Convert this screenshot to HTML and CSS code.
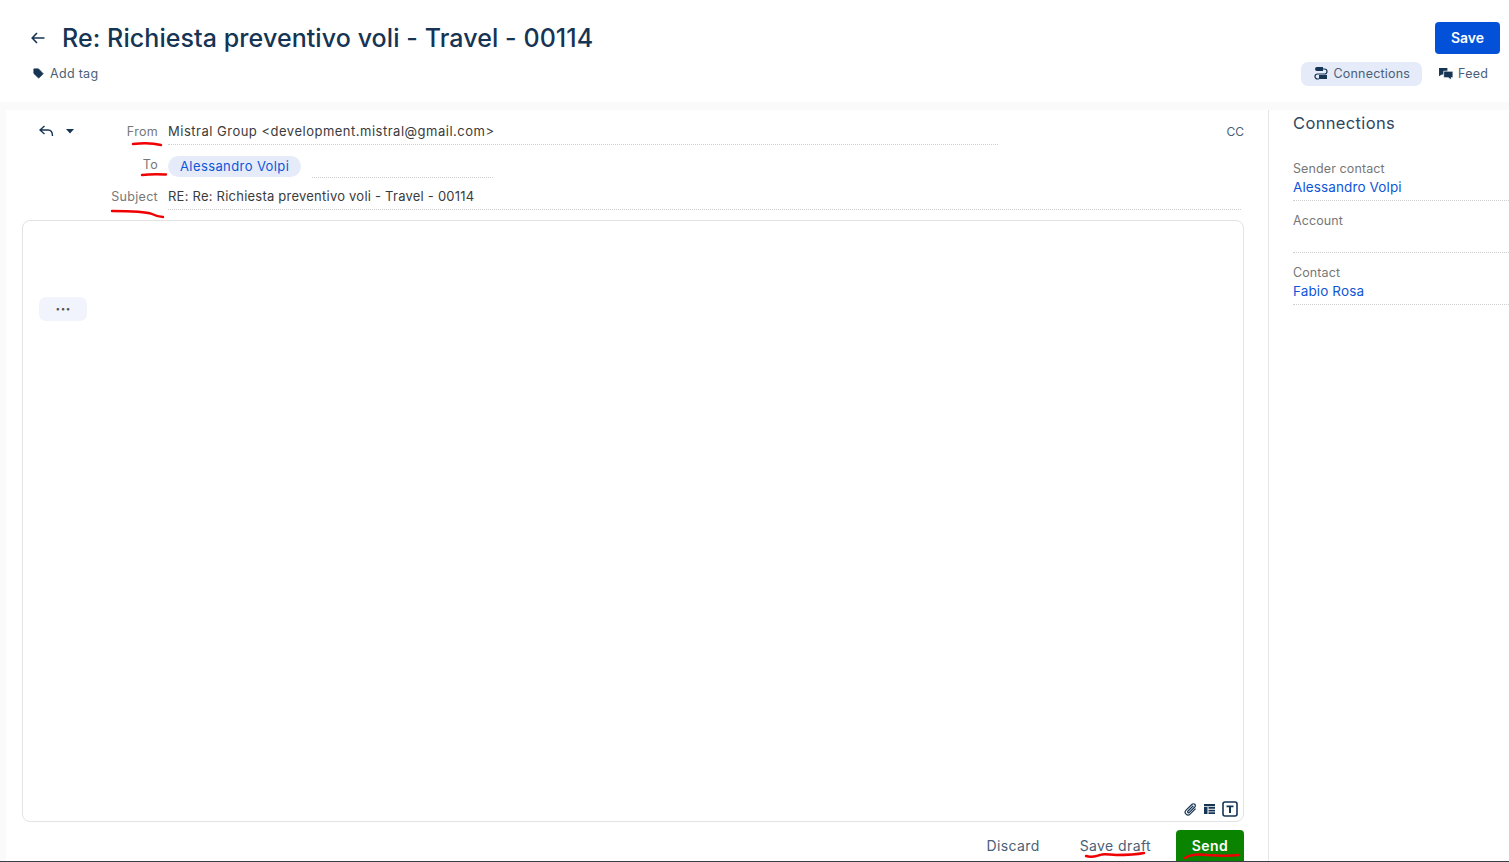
FILE: index.html
```html
<!DOCTYPE html>
<html lang="en">
<head>
    <meta charset="UTF-8">
    <meta name="viewport" content="width=device-width, initial-scale=1.0">
    <title>Re: Richiesta preventivo voli - Travel - 00114</title>
    <link rel="stylesheet" href="styles.css">
</head>
<body>
    <div class="page">
        <header class="page-header">
            <div class="title-row">
                <svg class="back-icon" viewBox="0 0 14 12" width="14" height="12"><path d="M6 1 1.200 6 6 11M1.500 6H13.500" fill="none" stroke="#163454" stroke-width="1.600"/></svg>
                <h1 class="title">Re: Richiesta preventivo voli - Travel - 00114</h1>
                <button class="save-btn">Save</button>
            </div>
            <div class="sub-row">
                <a class="add-tag">
                    <svg viewBox="0 0 12 12" width="11" height="11"><path d="M1 1h5l5 5.200L6.200 11 1 6z" fill="#163454" stroke="#163454" stroke-linejoin="round"/></svg>
                    Add tag
                </a>
                <div class="tabs">
                    <a class="tab tab-active">
                        <svg viewBox="0 0 14 14" width="14" height="14"><path d="M3 1h6v4H3a2 2 0 0 1 0-4zM5 9h8v4H5z" fill="#163454"/><path d="M9 3h1.500a2.500 2.500 0 0 1 0 5H3.500a2.500 2.500 0 0 0 0 5H5" fill="none" stroke="#163454" stroke-width="1.200"/></svg>
                        Connections
                    </a>
                    <a class="tab tab-feed">
                        <svg viewBox="0 0 15 14" width="14" height="13"><path d="M0 1h9v7H3L0 10z" fill="#163454"/><path d="M5 4.500h10v7h-2v2.500l-3-2.500H5z" fill="#163454" stroke="#fff" stroke-width=".8"/></svg>
                        Feed
                    </a>
                </div>
            </div>
        </header>

        <main class="content">
            <section class="composer">
                <div class="fields">
                    <div class="reply-tools">
                        <svg viewBox="0 0 15 12" width="15" height="12"><path d="M5.500 1 1 5l4.500 4M1.500 5H9c3 0 4.500 2 4.500 6" fill="none" stroke="#163454" stroke-width="1.400"/></svg>
                        <svg viewBox="0 0 8 5" width="8" height="5"><path d="M0 0h8L4 4.500z" fill="#163454"/></svg>
                    </div>
                    <div class="field-rows">
                        <div class="field-row row-from">
                            <span class="field-label">From</span>
                            <span class="field-value value-from">Mistral Group &lt;development.mistral@gmail.com&gt;</span>
                            <span class="cc">CC</span>
                        </div>
                        <div class="field-row row-to">
                            <span class="field-label">To</span>
                            <span class="pill">Alessandro Volpi</span>
                            <span class="to-input"></span>
                        </div>
                        <div class="field-row row-subject">
                            <span class="field-label">Subject</span>
                            <span class="field-value value-subject">RE: Re: Richiesta preventivo voli - Travel - 00114</span>
                        </div>
                    </div>
                </div>

                <div class="editor">
                    <button class="quote-btn">···</button>
                    <div class="editor-tools">
                        <svg viewBox="0 0 14 14" width="13" height="13"><path d="M12.500 6 6.500 12a3 3 0 0 1-4.300-4.300L8.700 1.400a2 2 0 0 1 2.900 2.900L5.500 10.300a1 1 0 0 1-1.400-1.400L10 3" fill="none" stroke="#163454" stroke-width="1.300"/></svg>
                        <svg viewBox="0 0 13 12" width="13" height="12"><path d="M1 1h11v2.200H1zM1 4h3.500v7H1zM5.500 4H12v1.800H5.500zM5.500 6.700H12v1.800H5.500zM5.500 9.300H12V11H5.500z" fill="#163454"/></svg>
                        <svg viewBox="0 0 16 16" width="16" height="16"><rect x="1" y="1" width="14" height="14" rx="2" fill="none" stroke="#163454" stroke-width="1.600"/><path d="M4.500 4.500h7v1.800H9V12H7V6.300H4.500z" fill="#163454"/></svg>
                    </div>
                </div>

                <div class="actions">
                    <a class="action-link">Discard</a>
                    <a class="action-link">Save draft</a>
                    <button class="send-btn">Send</button>
                </div>
            </section>

            <aside class="sidebar">
                <h2 class="sidebar-title">Connections</h2>
                <div class="conn-item">
                    <div class="conn-label">Sender contact</div>
                    <a class="conn-value">Alessandro Volpi</a>
                </div>
                <div class="conn-item">
                    <div class="conn-label">Account</div>
                    <a class="conn-value">&nbsp;</a>
                </div>
                <div class="conn-item">
                    <div class="conn-label">Contact</div>
                    <a class="conn-value">Fabio Rosa</a>
                </div>
            </aside>
        </main>

        <!-- red pen marks drawn on top of the screenshot -->
        <svg class="scribbles" viewBox="0 0 1509 862" width="1509" height="862">
            <g fill="none" stroke="#f00000" stroke-width="2.400" stroke-linecap="round">
                <path d="M133 144c9-1 20-1 28 1"/>
                <path d="M142 175c8-1 16-1 24-.5"/>
                <path d="M112 211c16 0 32 0 40 3 4 2 6 3 11 3"/>
                <path d="M1086 856c6 2 10 0 14-1 4-2 10 0 16 0s18 0 28-2"/>
                <path d="M1185 858c6-4 14-4 22-3 12 1 24 1 32 0"/>
            </g>
        </svg>
    </div>
</body>
</html>
```

FILE: styles.css
```css
* {
    box-sizing: border-box;
}
body {
    margin: 0;
    font-family: Inter, "Open Sans", sans-serif;
    background-color: #fff;
    color: #163454;
}
button {
    font-family: inherit;
    border: none;
    cursor: pointer;
}
.page {
    position: relative;
    height: 862px;
    overflow: hidden;
    display: flex;
    flex-direction: column;
    background-color: #fafafa;
    border-bottom: 1px solid #3a3f45;
}
.page-header {
    height: 102px;
    padding: 22px 9px 0 31px;
    background-color: #fff;
    flex-shrink: 0;
}
.title-row {
    display: flex;
    align-items: center;
    height: 32px;
}
.back-icon {
    margin-right: 17px;
}
.title {
    margin: 0;
    font-size: 25px;
    font-weight: 500;
    letter-spacing: 0.08px;
    color: #163454;
}
.save-btn {
    margin-left: auto;
    width: 65px;
    height: 32px;
    padding-bottom: 2px;
    border-radius: 4px;
    background-color: #0251d8;
    color: #fff;
    font-size: 14px;
    font-weight: 600;
}
.sub-row {
    display: flex;
    align-items: center;
    justify-content: space-between;
    margin-top: 8px;
    height: 24px;
}
.add-tag {
    display: flex;
    align-items: center;
    gap: 6px;
    padding: 0 0 2px 2px;
    font-size: 12.5px;
    letter-spacing: 0.3px;
    color: #4a5f78;
}
.tabs {
    display: flex;
    gap: 5px;
}
.tab {
    display: flex;
    align-items: center;
    gap: 5px;
    height: 24px;
    padding: 0 12px 2px 13px;
    border-radius: 7px;
    font-size: 12.5px;
    letter-spacing: 0.2px;
    color: #4a5f78;
}
.tab-active {
    background-color: #e5ebf8;
}
.tab-feed {
    padding-left: 12px;
}
.content {
    display: flex;
    flex: 1;
    min-height: 0;
    margin-top: 8px;
    margin-left: 6px;
    background-color: #fff;
}
.composer {
    width: 1263px;
    flex-shrink: 0;
    padding: 8px 24px 0 16px;
    border-right: 1px solid #e6e6e6;
    display: flex;
    flex-direction: column;
}
.fields {
    display: flex;
    flex-shrink: 0;
}
.reply-tools {
    width: 60px;
    padding: 0 0 0 17px;
    display: flex;
    align-items: center;
    gap: 12px;
    height: 26px;
    flex-shrink: 0;
}
.field-rows {
    flex: 1;
    margin-left: -76px;
    padding-left: 76px;
}
.field-row {
    display: flex;
    align-items: center;
    font-size: 13px;
}
.field-label {
    width: 82px;
    margin-right: 10px;
    margin-left: -6px;
    text-align: right;
    font-size: 12.5px;
    letter-spacing: 0.3px;
    color: #777;
}
.field-value {
    color: #3b3b3b;
}
.row-from {
    height: 27px;
}
.value-from {
    width: 830px;
    height: 27px;
    line-height: 27px;
    letter-spacing: 0.5px;
    border-bottom: 1px dotted #cfcfcf;
}
.cc {
    margin-left: auto;
    font-size: 12px;
    color: #4a5f78;
}
.row-to {
    height: 37px;
}
.row-to .field-label {
    margin-top: 1px;
}
.pill {
    height: 21px;
    margin-top: 6px;
    padding: 0 12px;
    line-height: 21px;
    border-radius: 11px;
    background-color: #e5ebf8;
    color: #0e56d8;
    letter-spacing: 0.4px;
}
.to-input {
    width: 181px;
    height: 1px;
    margin-top: 28px;
    margin-left: 11px;
    border-bottom: 1px dotted #cfcfcf;
}
.row-subject {
    height: 28px;
}
.value-subject {
    flex: 1;
    height: 28px;
    margin-right: 3px;
    line-height: 28px;
    letter-spacing: 0.23px;
    border-bottom: 1px dotted #cfcfcf;
}
.editor {
    position: relative;
    height: 602px;
    flex-shrink: 0;
    margin-top: 10px;
    border: 1px solid #e3e3e3;
    border-radius: 8px;
    padding: 76px 0 0 16px;
    display: flex;
    flex-direction: column;
    align-items: flex-start;
}
.quote-btn {
    width: 48px;
    height: 24px;
    border-radius: 7px;
    background-color: #f1f4fc;
    color: #555;
    font-size: 16px;
    font-weight: 600;
    line-height: 24px;
    padding: 0;
}
.editor-tools {
    margin-top: auto;
    align-self: flex-end;
    display: flex;
    align-items: center;
    gap: 6px;
    padding: 0 5px 4px 0;
}
.actions {
    display: flex;
    align-items: flex-start;
    justify-content: flex-end;
    margin-top: 8px;
    font-size: 14px;
    letter-spacing: 0.4px;
    color: #4a5f78;
}
.action-link {
    margin-top: 7px;
    margin-right: 40px;
}
.action-link + .action-link {
    margin-right: 25px;
}
.send-btn {
    width: 68px;
    height: 34px;
    padding-bottom: 4px;
    border-radius: 4px;
    background-color: #0a8400;
    color: #fff;
    font-size: 14px;
    font-weight: 600;
    letter-spacing: 0.4px;
}
.sidebar {
    flex: 1;
    padding-left: 24px;
}
.sidebar-title {
    margin: 3px 0 25px;
    font-size: 16.5px;
    font-weight: 400;
    color: #31465f;
    letter-spacing: 0.35px;
}
.conn-item {
    height: 52px;
    padding-top: 3px;
}
.conn-label {
    height: 16px;
    font-size: 12.5px;
    line-height: 16px;
    letter-spacing: 0.1px;
    color: #777;
}
.conn-value {
    display: block;
    height: 24px;
    padding-top: 1px;
    font-size: 13.5px;
    line-height: 18px;
    letter-spacing: 0.12px;
    color: #0e56d8;
    border-bottom: 1px dotted #cfcfcf;
}
.scribbles {
    position: absolute;
    top: 0;
    left: 0;
    pointer-events: none;
}
```
